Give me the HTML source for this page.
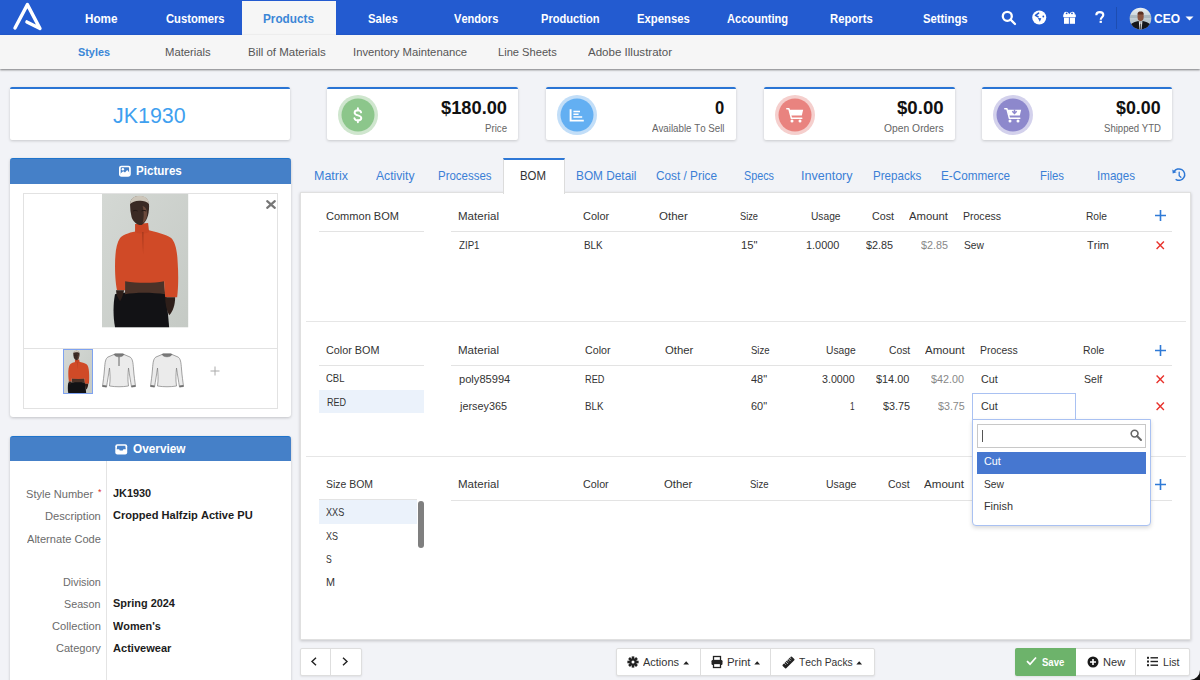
<!DOCTYPE html>
<html><head><meta charset="utf-8"><title>JK1930</title>
<style>
html,body{margin:0;padding:0;}
body{width:1200px;height:680px;overflow:hidden;position:relative;background:#f2f3f7;font-family:"Liberation Sans",sans-serif;}
.t{position:absolute;white-space:nowrap;line-height:1;font-kerning:none;}
.b{position:absolute;}
svg.b{overflow:visible;}
</style></head><body>
<div class="b" style="left:0px;top:0px;width:1200px;height:35px;background:#235bd0;"></div>
<div class="b" style="left:242px;top:1px;width:94px;height:34px;background:#f6f6f6;"></div>
<div class="b" style="left:0px;top:35px;width:1200px;height:34px;background:#f6f6f6;box-shadow:0 1px 2px rgba(0,0,0,.5);z-index:1;"></div>
<svg class="b" style="left:0px;top:0px;z-index:2;" width="48" height="35" viewBox="0 0 48 35"><path d="M15,28 L27.4,4.6 L40,28.6 L26.9,21.9" fill="none" stroke="#fff" stroke-width="3.4" stroke-linecap="round" stroke-linejoin="round"/></svg>
<div class="t" style="left:85.00px;top:12.69px;font-size:12.4px;color:#fff;font-weight:700;transform:scaleX(0.9436);transform-origin:0 0;z-index:2;">Home</div>
<div class="t" style="left:165.70px;top:12.69px;font-size:12.4px;color:#fff;font-weight:700;transform:scaleX(0.9053);transform-origin:0 0;z-index:2;">Customers</div>
<div class="t" style="left:263.30px;top:12.69px;font-size:12.4px;color:#3b86d6;font-weight:700;transform:scaleX(0.9499);transform-origin:0 0;z-index:2;">Products</div>
<div class="t" style="left:367.50px;top:12.69px;font-size:12.4px;color:#fff;font-weight:700;transform:scaleX(0.9177);transform-origin:0 0;z-index:2;">Sales</div>
<div class="t" style="left:454.00px;top:12.69px;font-size:12.4px;color:#fff;font-weight:700;transform:scaleX(0.8937);transform-origin:0 0;z-index:2;">Vendors</div>
<div class="t" style="left:540.70px;top:12.69px;font-size:12.4px;color:#fff;font-weight:700;transform:scaleX(0.8963);transform-origin:0 0;z-index:2;">Production</div>
<div class="t" style="left:637.30px;top:12.69px;font-size:12.4px;color:#fff;font-weight:700;transform:scaleX(0.9115);transform-origin:0 0;z-index:2;">Expenses</div>
<div class="t" style="left:726.70px;top:12.69px;font-size:12.4px;color:#fff;font-weight:700;transform:scaleX(0.8956);transform-origin:0 0;z-index:2;">Accounting</div>
<div class="t" style="left:830.00px;top:12.69px;font-size:12.4px;color:#fff;font-weight:700;transform:scaleX(0.9122);transform-origin:0 0;z-index:2;">Reports</div>
<div class="t" style="left:922.70px;top:12.69px;font-size:12.4px;color:#fff;font-weight:700;transform:scaleX(0.9129);transform-origin:0 0;z-index:2;">Settings</div>
<svg class="b" style="left:1001px;top:10px;z-index:2;" width="16" height="16" viewBox="0 0 16 16"><circle cx="6.3" cy="6.3" r="4.5" fill="none" stroke="#fff" stroke-width="2.3"/><path d="M9.6 9.6 L14 14" stroke="#fff" stroke-width="2.3" stroke-linecap="round"/></svg>
<svg class="b" style="left:1031px;top:10px;z-index:2;" width="17" height="16" viewBox="0 0 17 16"><circle cx="8.25" cy="7.5" r="7" fill="#fff"/><path d="M7.6 3.2 L4.5 5.4 L7 6.8" fill="none" stroke="#235bd0" stroke-width="1.6" stroke-linecap="round" stroke-linejoin="round"/><circle cx="12.3" cy="6.5" r="0.9" fill="#235bd0"/><path d="M6.9 7.9 L10.3 8.2 L8.8 11.8 Z" fill="#235bd0"/></svg>
<svg class="b" style="left:1062px;top:10px;z-index:2;" width="15" height="15" viewBox="0 0 15 15"><path d="M1.8 5 C1.3 1.2 5.6 0.6 7.3 4.3 C9 0.6 13.3 1.2 12.8 5 Z" fill="#fff"/><circle cx="4.6" cy="3.4" r="0.9" fill="#235bd0"/><circle cx="10" cy="3.4" r="0.9" fill="#235bd0"/><rect x="1.2" y="4.5" width="12.6" height="2.7" fill="#fff"/><rect x="2" y="7.6" width="11" height="6.2" fill="#fff"/><rect x="6.9" y="7.4" width="0.9" height="6.6" fill="#235bd0"/></svg>
<svg class="b" style="left:1094px;top:11px;z-index:2;" width="12" height="13" viewBox="0 0 12 13"><path d="M2.3 4.2 C2.3 2.2 3.8 1.1 5.8 1.1 C7.9 1.1 9.3 2.3 9.3 4 C9.3 6 6.8 6.3 6.8 8.3 V8.7" fill="none" stroke="#fff" stroke-width="2.1"/><rect x="5.6" y="9.8" width="2.3" height="2.1" fill="#fff"/></svg>
<div class="b" style="left:1116px;top:7px;width:1px;height:22px;background:rgba(0,0,0,.15);z-index:2;"></div>
<svg class="b" style="left:1129px;top:7px;z-index:2;" width="23" height="23" viewBox="0 0 23 23"><defs><clipPath id="av"><circle cx="11.5" cy="11.5" r="10.8"/></clipPath><linearGradient id="avg" x1="0" y1="0" x2="0" y2="1"><stop offset="0" stop-color="#eef3f5"/><stop offset="0.6" stop-color="#b9c6cc"/></linearGradient></defs><g clip-path="url(#avg)"></g><g clip-path="url(#av)"><rect width="23" height="23" fill="url(#avg)"/><rect x="0" y="8" width="23" height="3" fill="#8fa0a8" opacity="0.5"/><ellipse cx="11.6" cy="9.6" rx="3.1" ry="4.6" fill="#8a5540"/><path d="M8.4 7.5 C8.5 5 10 4.5 11.6 4.5 C13.3 4.5 14.7 5 14.8 7.5Z" fill="#5a3020"/><path d="M0 23 L1 18 C3 15.5 7 14.5 9.5 14 L11.6 16 L13.7 14 C16 14.5 20 15.5 22 18 L23 23Z" fill="#15171b"/><path d="M9.8 14.3 L11.6 16 L13.4 14.3 L12.6 23 L10.6 23Z" fill="#e8e8e8"/><path d="M11.1 16.5 L12.1 16.5 L12.4 23 L10.8 23Z" fill="#555"/></g></svg>
<div class="t" style="left:1154.00px;top:11.58px;font-size:13.2px;color:#fff;font-weight:700;transform:scaleX(0.9087);transform-origin:0 0;z-index:2;">CEO</div>
<svg class="b" style="left:1185px;top:16px;z-index:2;" width="9" height="5" viewBox="0 0 9 5"><path d="M0.5 0.5 L8.5 0.5 L4.5 4.5Z" fill="#fff"/></svg>
<div class="t" style="left:78.00px;top:46.77px;font-size:11.8px;color:#3b86d6;font-weight:700;transform:scaleX(0.9216);transform-origin:0 0;z-index:2;">Styles</div>
<div class="t" style="left:165.00px;top:46.77px;font-size:11.8px;color:#555;transform:scaleX(0.9557);transform-origin:0 0;z-index:2;">Materials</div>
<div class="t" style="left:248.00px;top:46.77px;font-size:11.8px;color:#555;transform:scaleX(0.9719);transform-origin:0 0;z-index:2;">Bill of Materials</div>
<div class="t" style="left:353.00px;top:46.77px;font-size:11.8px;color:#555;transform:scaleX(0.9563);transform-origin:0 0;z-index:2;">Inventory Maintenance</div>
<div class="t" style="left:498.00px;top:46.77px;font-size:11.8px;color:#555;transform:scaleX(0.9430);transform-origin:0 0;z-index:2;">Line Sheets</div>
<div class="t" style="left:587.70px;top:46.77px;font-size:11.8px;color:#555;transform:scaleX(0.9788);transform-origin:0 0;z-index:2;">Adobe Illustrator</div>
<div class="b" style="left:10px;top:87px;width:280px;height:53px;background:#fff;box-shadow:0 1px 3px rgba(0,0,0,.18);border-top:2px solid #2a74d4;box-sizing:border-box;border-radius:2px;"></div>
<div class="t" style="left:112.50px;top:104.67px;font-size:22.5px;color:#3fa0ef;transform:scaleX(0.9512);transform-origin:0 0;">JK1930</div>
<div class="b" style="left:10px;top:158px;width:281px;height:259px;background:#fff;box-shadow:0 1px 3px rgba(0,0,0,.2);border-radius:3px;"></div>
<div class="b" style="left:10px;top:158px;width:281px;height:26px;background:#4580c8;border-top:1px solid #1f74cc;box-sizing:border-box;border-radius:3px 3px 0 0;"></div>
<svg class="b" style="left:118px;top:165px;" width="13" height="12" viewBox="0 0 13 12"><rect x="1.85" y="1.5" width="10.1" height="9.4" rx="1.6" fill="none" stroke="#fff" stroke-width="1.7"/><circle cx="4.9" cy="4.2" r="1.2" fill="#fff"/><path d="M2.5 10.5 V8.6 L5.2 6.3 L7 7.6 L9.2 5 L11.3 7.6 V10.5Z" fill="#fff"/></svg>
<div class="t" style="left:136.00px;top:165.24px;font-size:12.8px;color:#fff;font-weight:700;transform:scaleX(0.9066);transform-origin:0 0;">Pictures</div>
<div class="b" style="left:23px;top:193px;width:255px;height:216px;border:1px solid #e2e2e2;box-sizing:border-box;"></div>
<div class="b" style="left:23px;top:348px;width:255px;height:1px;background:#e2e2e2;"></div>
<svg class="b" style="left:266px;top:200px;" width="10" height="9" viewBox="0 0 10 9"><path d="M1.2 1.2 L8.8 7.8 M8.8 1.2 L1.2 7.8" stroke="#777" stroke-width="2.2" stroke-linecap="round"/></svg>
<svg class="b" style="left:101.8px;top:193.7px" width="86.2" height="133.3" viewBox="0 0 86 133" preserveAspectRatio="none"><defs><linearGradient id="bgp1" x1="0" y1="0" x2="1" y2="1"><stop offset="0" stop-color="#d4d8d4"/><stop offset="1" stop-color="#c5cac5"/></linearGradient></defs><rect width="86" height="133" fill="url(#bgp1)"/><path d="M13 100 C25 97 50 97 64 99 L67 133 L13 133 C11 122 11 110 13 100Z" fill="#121215"/><path d="M23 86 L62 86 L63 100 C50 98 33 98 23 100Z" fill="#4a3228"/><path d="M36 37 C29 38 22 40 18 44 C14 50 13 60 13 72 C13 83 14 91 15 96 L23 96 L23 87 C36 89 51 89 62 87 L63 103 L75 103 C76 95 76.5 82 75.5 68 C75 56 73 48 69 44 C63 40 53 38 46 36 Z" fill="#d04a27"/><path d="M33 30 L46 29 L47 38 C43 40 37 40 33 38Z" fill="#c94524"/><path d="M40 38 L41.5 38 L41 60Z" fill="#a83a1e"/><path d="M63 103 L73 103 C73 110 71 117 67 121 C64 115 63 108 63 103Z" fill="#2e1f1a"/><path d="M14 96 L22 96 C21 101 20 104 18 107 C16 104 14 100 14 96Z" fill="#2e1f1a"/><path d="M28 11 C28 5 32 2 37.5 2 C43 2 47 5.5 47 12 C47 21 44.5 28 39.5 31 C35.5 31.5 31 28 29.5 23 C28.5 19 28 15 28 11Z" fill="#3a2a24"/><path d="M28 10 C28.5 4.5 32 1.8 37.5 1.8 C43 1.8 46.5 4.5 47 10 C44.5 7 40 6.5 37 6.8 C33 7 30 8 28 10Z" fill="#cdc6ba"/><path d="M40.5 12 C44 13 45.5 17 44.8 22 C44 26 42.5 28 40.5 29 C42 24.5 42 17 40.5 12Z" fill="#6b4a3c"/><path d="M31 17 C32.5 16.2 34 16.2 35.5 17 M39.5 17 C41 16.2 42.5 16.2 44 17" stroke="#1e1512" stroke-width="0.9" fill="none"/></svg>
<svg class="b" style="left:63.5px;top:349.5px" width="28.5" height="43.5" viewBox="0 0 86 133" preserveAspectRatio="none"><defs><linearGradient id="bgp2" x1="0" y1="0" x2="1" y2="1"><stop offset="0" stop-color="#d4d8d4"/><stop offset="1" stop-color="#c5cac5"/></linearGradient></defs><rect width="86" height="133" fill="url(#bgp2)"/><path d="M13 100 C25 97 50 97 64 99 L67 133 L13 133 C11 122 11 110 13 100Z" fill="#121215"/><path d="M23 86 L62 86 L63 100 C50 98 33 98 23 100Z" fill="#4a3228"/><path d="M36 37 C29 38 22 40 18 44 C14 50 13 60 13 72 C13 83 14 91 15 96 L23 96 L23 87 C36 89 51 89 62 87 L63 103 L75 103 C76 95 76.5 82 75.5 68 C75 56 73 48 69 44 C63 40 53 38 46 36 Z" fill="#d04a27"/><path d="M33 30 L46 29 L47 38 C43 40 37 40 33 38Z" fill="#c94524"/><path d="M40 38 L41.5 38 L41 60Z" fill="#a83a1e"/><path d="M63 103 L73 103 C73 110 71 117 67 121 C64 115 63 108 63 103Z" fill="#2e1f1a"/><path d="M14 96 L22 96 C21 101 20 104 18 107 C16 104 14 100 14 96Z" fill="#2e1f1a"/><path d="M28 11 C28 5 32 2 37.5 2 C43 2 47 5.5 47 12 C47 21 44.5 28 39.5 31 C35.5 31.5 31 28 29.5 23 C28.5 19 28 15 28 11Z" fill="#3a2a24"/><path d="M28 10 C28.5 4.5 32 1.8 37.5 1.8 C43 1.8 46.5 4.5 47 10 C44.5 7 40 6.5 37 6.8 C33 7 30 8 28 10Z" fill="#cdc6ba"/><path d="M40.5 12 C44 13 45.5 17 44.8 22 C44 26 42.5 28 40.5 29 C42 24.5 42 17 40.5 12Z" fill="#6b4a3c"/><path d="M31 17 C32.5 16.2 34 16.2 35.5 17 M39.5 17 C41 16.2 42.5 16.2 44 17" stroke="#1e1512" stroke-width="0.9" fill="none"/></svg>
<div class="b" style="left:63px;top:349px;width:30px;height:45px;border:1px solid #7ea2f0;box-sizing:border-box;"></div>
<svg class="b" style="left:102px;top:352.5px" width="34" height="36" viewBox="0 0 34 36"><path d="M12 1.5 L22 1.5 L28 4 C30.5 5.5 31 9 31.5 16 C32 23 33 29 33.5 33.5 L29.5 34 C28.5 28 27.5 22 26.5 15 C26 21 25.5 26 26.5 33 C20 34 14 34 7.5 33 C8.5 26 8 21 7.5 15 C6.5 22 5.5 28 4.5 34 L0.5 33.5 C1 29 2 23 2.5 16 C3 9 3.5 5.5 6 4 Z" fill="#ebebeb" stroke="#7d7d7d" stroke-width="0.7"/><path d="M12 1.5 C14 4.5 20 4.5 22 1.5 L21 0.8 L13 0.8Z" fill="#7a7a7a" stroke="#666" stroke-width="0.6"/><path d="M17 4 V13" stroke="#666" stroke-width="1"/><path d="M0.6 32 L4.6 32.5 L4.5 34.3 L0.5 33.8Z M29.4 32.5 L33.4 32 L33.5 33.8 L29.5 34.3Z" fill="#6f6f6f"/></svg>
<svg class="b" style="left:149.5px;top:352.5px" width="34" height="36" viewBox="0 0 34 36"><path d="M12 1.5 L22 1.5 L28 4 C30.5 5.5 31 9 31.5 16 C32 23 33 29 33.5 33.5 L29.5 34 C28.5 28 27.5 22 26.5 15 C26 21 25.5 26 26.5 33 C20 34 14 34 7.5 33 C8.5 26 8 21 7.5 15 C6.5 22 5.5 28 4.5 34 L0.5 33.5 C1 29 2 23 2.5 16 C3 9 3.5 5.5 6 4 Z" fill="#ebebeb" stroke="#7d7d7d" stroke-width="0.7"/><path d="M12 1.5 C14 4.5 20 4.5 22 1.5 L21 0.8 L13 0.8Z" fill="#7a7a7a" stroke="#666" stroke-width="0.6"/><path d="M0.6 32 L4.6 32.5 L4.5 34.3 L0.5 33.8Z M29.4 32.5 L33.4 32 L33.5 33.8 L29.5 34.3Z" fill="#6f6f6f"/></svg>
<svg class="b" style="left:210px;top:366px;" width="10" height="10" viewBox="0 0 10 10"><path d="M5 0.5 V9.5 M0.5 5 H9.5" stroke="#aaa" stroke-width="1"/></svg>
<div class="b" style="left:10px;top:436px;width:281px;height:264px;background:#fff;box-shadow:0 1px 3px rgba(0,0,0,.2);border-radius:3px;"></div>
<div class="b" style="left:10px;top:436px;width:281px;height:25px;background:#4580c8;border-top:1px solid #1f74cc;box-sizing:border-box;border-radius:3px 3px 0 0;"></div>
<svg class="b" style="left:115px;top:443.5px;" width="13" height="11" viewBox="0 0 13 11"><rect x="0.3" y="0.2" width="11.9" height="10.4" rx="2" fill="#fff"/><path d="M2.2 1.8 H10.3 L10.8 5.3 H8.4 L7.7 6.5 H4.8 L4.1 5.3 H1.7Z" fill="#4580c8"/></svg>
<div class="t" style="left:133.00px;top:442.94px;font-size:12.8px;color:#fff;font-weight:700;transform:scaleX(0.9227);transform-origin:0 0;">Overview</div>
<div class="b" style="left:105.5px;top:461px;width:1.0px;height:239px;background:#e4e4e4;"></div>
<div class="t" style="left:26.00px;top:487.89px;font-size:11.6px;color:#6b6b6b;transform:scaleX(0.9557);transform-origin:0 0;">Style Number</div>
<div class="t" style="left:97.90px;top:487.73px;font-size:9px;color:#e0302a;">*</div>
<div class="t" style="left:112.90px;top:487.49px;font-size:11.6px;color:#1c1c1c;font-weight:700;transform:scaleX(0.9391);transform-origin:0 0;">JK1930</div>
<div class="t" style="left:44.60px;top:509.74px;font-size:11.6px;color:#6b6b6b;transform:scaleX(0.9626);transform-origin:0 0;">Description</div>
<div class="t" style="left:112.90px;top:509.34px;font-size:11.6px;color:#1c1c1c;font-weight:700;transform:scaleX(0.9549);transform-origin:0 0;">Cropped Halfzip Active PU</div>
<div class="t" style="left:26.50px;top:532.69px;font-size:11.6px;color:#6b6b6b;transform:scaleX(0.9562);transform-origin:0 0;">Alternate Code</div>
<div class="t" style="left:62.50px;top:575.79px;font-size:11.6px;color:#6b6b6b;transform:scaleX(0.9335);transform-origin:0 0;">Division</div>
<div class="t" style="left:64.00px;top:597.69px;font-size:11.6px;color:#6b6b6b;transform:scaleX(0.9263);transform-origin:0 0;">Season</div>
<div class="t" style="left:112.90px;top:597.29px;font-size:11.6px;color:#1c1c1c;font-weight:700;transform:scaleX(0.9424);transform-origin:0 0;">Spring 2024</div>
<div class="t" style="left:51.50px;top:620.19px;font-size:11.6px;color:#6b6b6b;transform:scaleX(0.9608);transform-origin:0 0;">Collection</div>
<div class="t" style="left:112.90px;top:619.79px;font-size:11.6px;color:#1c1c1c;font-weight:700;transform:scaleX(0.9379);transform-origin:0 0;">Women's</div>
<div class="t" style="left:55.60px;top:642.49px;font-size:11.6px;color:#6b6b6b;transform:scaleX(0.9530);transform-origin:0 0;">Category</div>
<div class="t" style="left:112.90px;top:642.09px;font-size:11.6px;color:#1c1c1c;font-weight:700;transform:scaleX(0.9536);transform-origin:0 0;">Activewear</div>
<div class="b" style="left:327px;top:87px;width:191px;height:53px;background:#fff;box-shadow:0 1px 3px rgba(0,0,0,.18);border-top:2px solid #2a74d4;box-sizing:border-box;border-radius:2px;"></div>
<svg class="b" style="left:338.3px;top:94.9px;" width="40" height="40" viewBox="0 0 40 40"><circle cx="20" cy="20" r="20" fill="#cfe6ce"/><circle cx="20" cy="20" r="16.5" fill="#8cc68b"/><path d="M23.1 17.4 C22.6 15.9 21.4 15.3 19.9 15.3 C17.9 15.3 16.6 16.3 16.6 17.8 C16.6 21.2 23.3 19.6 23.3 23 C23.3 24.6 21.9 25.4 19.9 25.4 C18.1 25.4 16.9 24.7 16.4 23.2" fill="none" stroke="#fff" stroke-width="1.9" stroke-linecap="round"/><path d="M19.9 13.1 V15.4 M19.9 25.3 V27.3" stroke="#fff" stroke-width="1.9" stroke-linecap="round"/></svg>
<div class="t" style="left:440.60px;top:99.09px;font-size:18.5px;color:#111;font-weight:700;transform:scaleX(0.9874);transform-origin:0 0;">$180.00</div>
<div class="t" style="left:484.50px;top:122.62px;font-size:10.6px;color:#666;transform:scaleX(0.9113);transform-origin:0 0;">Price</div>
<div class="b" style="left:546px;top:87px;width:190px;height:53px;background:#fff;box-shadow:0 1px 3px rgba(0,0,0,.18);border-top:2px solid #2a74d4;box-sizing:border-box;border-radius:2px;"></div>
<svg class="b" style="left:557.3px;top:94.9px;" width="40" height="40" viewBox="0 0 40 40"><circle cx="20" cy="20" r="20" fill="#c2def8"/><circle cx="20" cy="20" r="16.5" fill="#63aff2"/><path d="M13.6 14.2 V25.6 H26.8" fill="none" stroke="#fff" stroke-width="1.9"/><path d="M16.4 16.6 H23 M16.4 19.3 H21.6 M16.4 22.1 H25.2" stroke="#fff" stroke-width="1.5"/></svg>
<div class="t" style="left:715.30px;top:99.09px;font-size:18.5px;color:#111;font-weight:700;transform:scaleX(0.8960);transform-origin:0 0;">0</div>
<div class="t" style="left:652.00px;top:122.62px;font-size:10.6px;color:#666;transform:scaleX(0.9193);transform-origin:0 0;">Available To Sell</div>
<div class="b" style="left:764px;top:87px;width:191px;height:53px;background:#fff;box-shadow:0 1px 3px rgba(0,0,0,.18);border-top:2px solid #2a74d4;box-sizing:border-box;border-radius:2px;"></div>
<svg class="b" style="left:775.3px;top:94.9px;" width="40" height="40" viewBox="0 0 40 40"><circle cx="20" cy="20" r="20" fill="#f5cfcd"/><circle cx="20" cy="20" r="16.5" fill="#e9837f"/><path d="M11.8 13.7 H13.9 L16.4 23.2 H26.8" fill="none" stroke="#fff" stroke-width="1.5" stroke-linejoin="round" stroke-linecap="round"/><path d="M14.4 14.8 H28.2 L26.8 20.6 H16Z" fill="#fff"/><circle cx="17" cy="26.1" r="1.5" fill="#fff"/><circle cx="25" cy="26.1" r="1.5" fill="#fff"/></svg>
<div class="t" style="left:897.00px;top:99.09px;font-size:18.5px;color:#111;font-weight:700;transform:scaleX(1.0064);transform-origin:0 0;">$0.00</div>
<div class="t" style="left:883.90px;top:122.62px;font-size:10.6px;color:#666;transform:scaleX(0.9740);transform-origin:0 0;">Open Orders</div>
<div class="b" style="left:982px;top:87px;width:190px;height:53px;background:#fff;box-shadow:0 1px 3px rgba(0,0,0,.18);border-top:2px solid #2a74d4;box-sizing:border-box;border-radius:2px;"></div>
<svg class="b" style="left:993.3px;top:94.9px;" width="40" height="40" viewBox="0 0 40 40"><circle cx="20" cy="20" r="20" fill="#d3d1ec"/><circle cx="20" cy="20" r="16.5" fill="#8d88cc"/><path d="M11.8 13.7 H13.9 L16.4 23.2 H26.8" fill="none" stroke="#fff" stroke-width="1.5" stroke-linejoin="round" stroke-linecap="round"/><path d="M14.4 14.8 H28.2 L26.8 20.6 H16Z" fill="#fff"/><circle cx="17" cy="26.1" r="1.5" fill="#fff"/><circle cx="25" cy="26.1" r="1.5" fill="#fff"/><path d="M21.5 14.6 V18 M19.3 16.3 L21.5 18.5 L23.7 16.3" stroke="#8d88cc" stroke-width="1.5" fill="none"/></svg>
<div class="t" style="left:1116.00px;top:99.09px;font-size:18.5px;color:#111;font-weight:700;transform:scaleX(0.9631);transform-origin:0 0;">$0.00</div>
<div class="t" style="left:1103.60px;top:122.62px;font-size:10.6px;color:#666;transform:scaleX(0.9033);transform-origin:0 0;">Shipped YTD</div>
<div class="b" style="left:300px;top:192px;width:891px;height:447.5px;background:#fff;box-shadow:0 1px 3px rgba(0,0,0,.2);border:1px solid #e0e0e0;box-sizing:border-box;"></div>
<div class="b" style="left:502.5px;top:158px;width:62.0px;height:36px;background:#fff;border:1px solid #dcdcdc;border-bottom:none;border-top:2px solid #2f78d6;box-sizing:border-box;z-index:1;"></div>
<div class="t" style="left:314.00px;top:169.66px;font-size:12.6px;color:#3b7fd6;transform:scaleX(0.9921);transform-origin:0 0;z-index:2;">Matrix</div>
<div class="t" style="left:376.00px;top:169.66px;font-size:12.6px;color:#3b7fd6;transform:scaleX(0.9647);transform-origin:0 0;z-index:2;">Activity</div>
<div class="t" style="left:437.50px;top:169.66px;font-size:12.6px;color:#3b7fd6;transform:scaleX(0.9102);transform-origin:0 0;z-index:2;">Processes</div>
<div class="t" style="left:520.00px;top:169.66px;font-size:12.6px;color:#333;transform:scaleX(0.9060);transform-origin:0 0;z-index:2;">BOM</div>
<div class="t" style="left:575.50px;top:169.66px;font-size:12.6px;color:#3b7fd6;transform:scaleX(0.9396);transform-origin:0 0;z-index:2;">BOM Detail</div>
<div class="t" style="left:656.00px;top:169.66px;font-size:12.6px;color:#3b7fd6;transform:scaleX(0.9373);transform-origin:0 0;z-index:2;">Cost / Price</div>
<div class="t" style="left:744.00px;top:169.66px;font-size:12.6px;color:#3b7fd6;transform:scaleX(0.8572);transform-origin:0 0;z-index:2;">Specs</div>
<div class="t" style="left:801.00px;top:169.66px;font-size:12.6px;color:#3b7fd6;transform:scaleX(0.9951);transform-origin:0 0;z-index:2;">Inventory</div>
<div class="t" style="left:872.70px;top:169.66px;font-size:12.6px;color:#3b7fd6;transform:scaleX(0.9204);transform-origin:0 0;z-index:2;">Prepacks</div>
<div class="t" style="left:941.00px;top:169.66px;font-size:12.6px;color:#3b7fd6;transform:scaleX(0.9305);transform-origin:0 0;z-index:2;">E-Commerce</div>
<div class="t" style="left:1040.00px;top:169.66px;font-size:12.6px;color:#3b7fd6;transform:scaleX(0.9027);transform-origin:0 0;z-index:2;">Files</div>
<div class="t" style="left:1097.00px;top:169.66px;font-size:12.6px;color:#3b7fd6;transform:scaleX(0.9209);transform-origin:0 0;z-index:2;">Images</div>
<svg class="b" style="left:1170px;top:166px;" width="16" height="16" viewBox="0 0 16 16"><path d="M4.06 5.75 A5.7 5.7 0 1 1 6.15 13.54" fill="none" stroke="#2f78d6" stroke-width="1.5" stroke-linecap="round"/><path d="M2.3 3.6 L6.6 6.3 L2.7 7.6Z" fill="#2f78d6"/><path d="M9.2 6.2 V9.6 L10.9 11.2" fill="none" stroke="#2f78d6" stroke-width="1.3" stroke-linecap="round"/></svg>
<div class="t" style="left:326.00px;top:210.92px;font-size:11.4px;color:#333;transform:scaleX(0.9691);transform-origin:0 0;">Common BOM</div>
<div class="b" style="left:319px;top:231px;width:105px;height:1px;background:#e3e3e3;"></div>
<div class="t" style="left:458.00px;top:211.02px;font-size:11.4px;color:#333;transform:scaleX(1.0124);transform-origin:0 0;">Material</div>
<div class="t" style="left:583.00px;top:211.02px;font-size:11.4px;color:#333;transform:scaleX(0.9645);transform-origin:0 0;">Color</div>
<div class="t" style="left:658.75px;top:211.02px;font-size:11.4px;color:#333;transform:scaleX(1.0098);transform-origin:0 0;">Other</div>
<div class="t" style="left:740.00px;top:211.02px;font-size:11.4px;color:#333;transform:scaleX(0.8118);transform-origin:0 0;">Size</div>
<div class="t" style="left:811.00px;top:211.02px;font-size:11.4px;color:#333;transform:scaleX(0.8962);transform-origin:0 0;">Usage</div>
<div class="t" style="left:872.00px;top:211.02px;font-size:11.4px;color:#333;transform:scaleX(0.9391);transform-origin:0 0;">Cost</div>
<div class="t" style="left:909.00px;top:211.02px;font-size:11.4px;color:#333;transform:scaleX(0.9938);transform-origin:0 0;">Amount</div>
<div class="t" style="left:963.00px;top:211.02px;font-size:11.4px;color:#333;transform:scaleX(0.9234);transform-origin:0 0;">Process</div>
<div class="t" style="left:1086.00px;top:211.02px;font-size:11.4px;color:#333;transform:scaleX(0.8964);transform-origin:0 0;">Role</div>
<svg class="b" style="left:1155px;top:210px;" width="11" height="11" viewBox="0 0 11 11"><path d="M5.5 0 V11 M0 5.5 H11" stroke="#2f7ad6" stroke-width="1.6"/></svg>
<div class="b" style="left:451px;top:231px;width:721px;height:1px;background:#e3e3e3;"></div>
<div class="t" style="left:458.75px;top:239.72px;font-size:11.4px;color:#333;transform:scaleX(0.8522);transform-origin:0 0;">ZIP1</div>
<div class="t" style="left:584.25px;top:239.72px;font-size:11.4px;color:#333;transform:scaleX(0.8702);transform-origin:0 0;">BLK</div>
<div class="t" style="left:740.50px;top:239.72px;font-size:11.4px;color:#333;transform:scaleX(0.9880);transform-origin:0 0;">15"</div>
<div class="t" style="left:806.25px;top:239.72px;font-size:11.4px;color:#333;transform:scaleX(0.9555);transform-origin:0 0;">1.0000</div>
<div class="t" style="left:866.00px;top:239.72px;font-size:11.4px;color:#333;transform:scaleX(0.9483);transform-origin:0 0;">$2.85</div>
<div class="t" style="left:920.50px;top:239.72px;font-size:11.4px;color:#888;transform:scaleX(0.9483);transform-origin:0 0;">$2.85</div>
<div class="t" style="left:963.75px;top:239.72px;font-size:11.4px;color:#333;transform:scaleX(0.9008);transform-origin:0 0;">Sew</div>
<div class="t" style="left:1087.00px;top:239.72px;font-size:11.4px;color:#333;transform:scaleX(0.9661);transform-origin:0 0;">Trim</div>
<svg class="b" style="left:1155.8px;top:241.4px;" width="8.5" height="8.5" viewBox="0 0 8.5 8.5"><path d="M0.6 0.6 L7.9 7.9 M7.9 0.6 L0.6 7.9" stroke="#e8322c" stroke-width="1.4"/></svg>
<div class="b" style="left:305.5px;top:321px;width:880.5px;height:1px;background:#e6e6e6;"></div>
<div class="t" style="left:326.20px;top:344.82px;font-size:11.4px;color:#333;transform:scaleX(0.9495);transform-origin:0 0;">Color BOM</div>
<div class="b" style="left:319px;top:365px;width:105px;height:1px;background:#e3e3e3;"></div>
<div class="t" style="left:326.20px;top:373.22px;font-size:11.4px;color:#333;transform:scaleX(0.8343);transform-origin:0 0;">CBL</div>
<div class="b" style="left:319px;top:390px;width:105px;height:23px;background:#ebf2fb;"></div>
<div class="t" style="left:326.70px;top:396.52px;font-size:11.4px;color:#333;transform:scaleX(0.7931);transform-origin:0 0;">RED</div>
<div class="t" style="left:458.30px;top:344.82px;font-size:11.4px;color:#333;transform:scaleX(1.0124);transform-origin:0 0;">Material</div>
<div class="t" style="left:584.50px;top:344.82px;font-size:11.4px;color:#333;transform:scaleX(0.9369);transform-origin:0 0;">Color</div>
<div class="t" style="left:665.00px;top:344.82px;font-size:11.4px;color:#333;transform:scaleX(0.9940);transform-origin:0 0;">Other</div>
<div class="t" style="left:750.70px;top:344.82px;font-size:11.4px;color:#333;transform:scaleX(0.8389);transform-origin:0 0;">Size</div>
<div class="t" style="left:826.40px;top:344.82px;font-size:11.4px;color:#333;transform:scaleX(0.8992);transform-origin:0 0;">Usage</div>
<div class="t" style="left:888.75px;top:344.82px;font-size:11.4px;color:#333;transform:scaleX(0.9071);transform-origin:0 0;">Cost</div>
<div class="t" style="left:925.30px;top:344.82px;font-size:11.4px;color:#333;transform:scaleX(1.0116);transform-origin:0 0;">Amount</div>
<div class="t" style="left:980.30px;top:344.82px;font-size:11.4px;color:#333;transform:scaleX(0.9161);transform-origin:0 0;">Process</div>
<div class="t" style="left:1083.30px;top:344.82px;font-size:11.4px;color:#333;transform:scaleX(0.9135);transform-origin:0 0;">Role</div>
<svg class="b" style="left:1155px;top:344.5px;" width="11" height="11" viewBox="0 0 11 11"><path d="M5.5 0 V11 M0 5.5 H11" stroke="#2f7ad6" stroke-width="1.6"/></svg>
<div class="b" style="left:451px;top:365px;width:721px;height:1px;background:#e3e3e3;"></div>
<div class="t" style="left:459.25px;top:373.82px;font-size:11.4px;color:#333;transform:scaleX(0.9757);transform-origin:0 0;">poly85994</div>
<div class="t" style="left:585.30px;top:373.82px;font-size:11.4px;color:#333;transform:scaleX(0.8056);transform-origin:0 0;">RED</div>
<div class="t" style="left:751.30px;top:373.82px;font-size:11.4px;color:#333;transform:scaleX(0.9580);transform-origin:0 0;">48"</div>
<div class="t" style="left:822.40px;top:373.82px;font-size:11.4px;color:#333;transform:scaleX(0.9368);transform-origin:0 0;">3.0000</div>
<div class="t" style="left:876.25px;top:373.82px;font-size:11.4px;color:#333;transform:scaleX(0.9555);transform-origin:0 0;">$14.00</div>
<div class="t" style="left:931.30px;top:373.82px;font-size:11.4px;color:#888;transform:scaleX(0.9454);transform-origin:0 0;">$42.00</div>
<div class="t" style="left:980.80px;top:373.82px;font-size:11.4px;color:#333;transform:scaleX(0.9421);transform-origin:0 0;">Cut</div>
<div class="t" style="left:1084.40px;top:373.82px;font-size:11.4px;color:#333;transform:scaleX(0.9255);transform-origin:0 0;">Self</div>
<svg class="b" style="left:1155.8px;top:375.4px;" width="8.5" height="8.5" viewBox="0 0 8.5 8.5"><path d="M0.6 0.6 L7.9 7.9 M7.9 0.6 L0.6 7.9" stroke="#e8322c" stroke-width="1.4"/></svg>
<div class="t" style="left:459.52px;top:400.72px;font-size:11.4px;color:#333;transform:scaleX(0.9517);transform-origin:0 0;">jersey365</div>
<div class="t" style="left:585.30px;top:400.72px;font-size:11.4px;color:#333;transform:scaleX(0.8540);transform-origin:0 0;">BLK</div>
<div class="t" style="left:751.30px;top:400.72px;font-size:11.4px;color:#333;transform:scaleX(0.9580);transform-origin:0 0;">60"</div>
<div class="t" style="left:850.40px;top:400.72px;font-size:11.4px;color:#333;transform:scaleX(0.7270);transform-origin:0 0;">1</div>
<div class="t" style="left:882.50px;top:400.72px;font-size:11.4px;color:#333;transform:scaleX(0.9483);transform-origin:0 0;">$3.75</div>
<div class="t" style="left:937.50px;top:400.72px;font-size:11.4px;color:#888;transform:scaleX(0.9378);transform-origin:0 0;">$3.75</div>
<svg class="b" style="left:1155.8px;top:402.4px;" width="8.5" height="8.5" viewBox="0 0 8.5 8.5"><path d="M0.6 0.6 L7.9 7.9 M7.9 0.6 L0.6 7.9" stroke="#e8322c" stroke-width="1.4"/></svg>
<div class="b" style="left:305.5px;top:455.5px;width:880.5px;height:1.0px;background:#e6e6e6;"></div>
<div class="t" style="left:326.00px;top:478.52px;font-size:11.4px;color:#333;transform:scaleX(0.9162);transform-origin:0 0;">Size BOM</div>
<div class="b" style="left:319px;top:499px;width:98px;height:1px;background:#e3e3e3;"></div>
<div class="b" style="left:319px;top:500px;width:98px;height:24px;background:#ebf2fb;"></div>
<div class="t" style="left:326.00px;top:506.52px;font-size:11.4px;color:#333;transform:scaleX(0.7994);transform-origin:0 0;">XXS</div>
<div class="t" style="left:326.00px;top:530.52px;font-size:11.4px;color:#333;transform:scaleX(0.7885);transform-origin:0 0;">XS</div>
<div class="t" style="left:326.00px;top:554.32px;font-size:11.4px;color:#333;transform:scaleX(0.7556);transform-origin:0 0;">S</div>
<div class="t" style="left:326.00px;top:577.32px;font-size:11.4px;color:#333;transform:scaleX(0.9483);transform-origin:0 0;">M</div>
<div class="b" style="left:418px;top:500.5px;width:6px;height:47.5px;background:#7f7f7f;border-radius:3px;"></div>
<div class="t" style="left:458.30px;top:478.72px;font-size:11.4px;color:#333;transform:scaleX(1.0124);transform-origin:0 0;">Material</div>
<div class="t" style="left:583.30px;top:478.72px;font-size:11.4px;color:#333;transform:scaleX(0.9442);transform-origin:0 0;">Color</div>
<div class="t" style="left:664.30px;top:478.72px;font-size:11.4px;color:#333;transform:scaleX(0.9940);transform-origin:0 0;">Other</div>
<div class="t" style="left:750.00px;top:478.72px;font-size:11.4px;color:#333;transform:scaleX(0.8389);transform-origin:0 0;">Size</div>
<div class="t" style="left:825.70px;top:478.72px;font-size:11.4px;color:#333;transform:scaleX(0.9205);transform-origin:0 0;">Usage</div>
<div class="t" style="left:887.70px;top:478.72px;font-size:11.4px;color:#333;transform:scaleX(0.9220);transform-origin:0 0;">Cost</div>
<div class="t" style="left:924.00px;top:478.72px;font-size:11.4px;color:#333;transform:scaleX(1.0193);transform-origin:0 0;">Amount</div>
<svg class="b" style="left:1155px;top:478.5px;" width="11" height="11" viewBox="0 0 11 11"><path d="M5.5 0 V11 M0 5.5 H11" stroke="#2f7ad6" stroke-width="1.6"/></svg>
<div class="b" style="left:451px;top:499.5px;width:721px;height:1.0px;background:#e3e3e3;"></div>
<div class="b" style="left:972px;top:393px;width:104px;height:27px;background:#fff;border:1px solid #a9c1f2;border-bottom:none;box-sizing:border-box;z-index:3;"></div>
<div class="t" style="left:980.80px;top:400.72px;font-size:11.4px;color:#333;transform:scaleX(0.9421);transform-origin:0 0;z-index:4;">Cut</div>
<div class="b" style="left:972px;top:419px;width:179px;height:107px;background:#fff;border:1px solid #a9c1f2;border-radius:0 0 4px 4px;box-sizing:border-box;box-shadow:0 2px 4px rgba(0,0,0,.15);z-index:3;"></div>
<div class="b" style="left:976.8px;top:423.5px;width:169.70000000000005px;height:24.5px;border:1px solid #c8c8c8;box-sizing:border-box;z-index:4;"></div>
<div class="b" style="left:982.3px;top:430px;width:1.0px;height:12px;background:#555;z-index:4;"></div>
<svg class="b" style="left:1130px;top:429px;z-index:4;" width="12" height="12" viewBox="0 0 12 12"><circle cx="4.6" cy="4.6" r="3.4" fill="none" stroke="#666" stroke-width="1.6"/><path d="M7 7 L11 11" stroke="#666" stroke-width="2" stroke-linecap="round"/></svg>
<div class="b" style="left:976.8px;top:451.5px;width:169.70000000000005px;height:22.0px;background:#4677d0;z-index:4;"></div>
<div class="t" style="left:983.50px;top:455.72px;font-size:11.4px;color:#fff;transform:scaleX(0.9477);transform-origin:0 0;z-index:5;">Cut</div>
<div class="t" style="left:983.50px;top:478.82px;font-size:11.4px;color:#333;transform:scaleX(0.9008);transform-origin:0 0;z-index:5;">Sew</div>
<div class="t" style="left:983.50px;top:500.92px;font-size:11.4px;color:#333;transform:scaleX(0.9513);transform-origin:0 0;z-index:5;">Finish</div>
<div class="b" style="left:299.5px;top:648px;width:62.0px;height:27.5px;background:#fff;border:1px solid #dedede;box-sizing:border-box;border-radius:2px;box-shadow:0 1px 2px rgba(0,0,0,.08);"></div>
<div class="b" style="left:330px;top:648px;width:1px;height:27.5px;background:#dedede;"></div>
<svg class="b" style="left:310px;top:657px;" width="8" height="9" viewBox="0 0 8 9"><path d="M6 0.8 L2 4.5 L6 8.2" fill="none" stroke="#222" stroke-width="1.4"/></svg>
<svg class="b" style="left:341px;top:657px;" width="8" height="9" viewBox="0 0 8 9"><path d="M2 0.8 L6 4.5 L2 8.2" fill="none" stroke="#222" stroke-width="1.4"/></svg>
<div class="b" style="left:616px;top:648px;width:258.5px;height:27.5px;background:#fff;border:1px solid #dedede;box-sizing:border-box;border-radius:2px;box-shadow:0 1px 2px rgba(0,0,0,.08);"></div>
<div class="b" style="left:700.2px;top:648px;width:1.0px;height:27.5px;background:#dedede;"></div>
<div class="b" style="left:770.3px;top:648px;width:1.0px;height:27.5px;background:#dedede;"></div>
<svg class="b" style="left:627px;top:656px;" width="12" height="12" viewBox="0 0 12 12"><g transform="translate(6 6)"><circle r="3.6" fill="#222"/><g fill="#222"><rect x="-1.3" y="-5.6" width="2.6" height="3" transform="rotate(0)"/><rect x="-1.3" y="-5.6" width="2.6" height="3" transform="rotate(45)"/><rect x="-1.3" y="-5.6" width="2.6" height="3" transform="rotate(90)"/><rect x="-1.3" y="-5.6" width="2.6" height="3" transform="rotate(135)"/><rect x="-1.3" y="-5.6" width="2.6" height="3" transform="rotate(180)"/><rect x="-1.3" y="-5.6" width="2.6" height="3" transform="rotate(225)"/><rect x="-1.3" y="-5.6" width="2.6" height="3" transform="rotate(270)"/><rect x="-1.3" y="-5.6" width="2.6" height="3" transform="rotate(315)"/></g><circle r="1.5" fill="#fff"/></g></svg>
<div class="t" style="left:643.00px;top:655.99px;font-size:11.6px;color:#333;transform:scaleX(0.9469);transform-origin:0 0;">Actions</div>
<svg class="b" style="left:682.5px;top:660.8px;" width="7" height="4" viewBox="0 0 7 4"><path d="M0.3 3.6 L3.2 0.3 L6.1 3.6Z" fill="#222"/></svg>
<svg class="b" style="left:711px;top:656px;" width="12" height="12" viewBox="0 0 12 12"><rect x="2.5" y="0.5" width="7" height="4" fill="none" stroke="#222" stroke-width="1.3"/><rect x="0.5" y="4" width="11" height="5" rx="1.2" fill="#222"/><rect x="2.5" y="7.5" width="7" height="4" fill="#fff" stroke="#222" stroke-width="1.3"/></svg>
<div class="t" style="left:727.00px;top:655.99px;font-size:11.6px;color:#333;transform:scaleX(0.9858);transform-origin:0 0;">Print</div>
<svg class="b" style="left:754px;top:660.8px;" width="7" height="4" viewBox="0 0 7 4"><path d="M0.3 3.6 L3.2 0.3 L6.1 3.6Z" fill="#222"/></svg>
<svg class="b" style="left:782px;top:655.5px;" width="13" height="13" viewBox="0 0 13 13"><g transform="rotate(-45 6.5 6.5)"><rect x="0" y="4" width="13" height="5" rx="0.8" fill="#222"/><path d="M3 4 V6 M5 4 V7 M7 4 V6 M9 4 V7 M11 4 V6" stroke="#fff" stroke-width="0.7"/></g></svg>
<div class="t" style="left:798.80px;top:655.99px;font-size:11.6px;color:#333;transform:scaleX(0.8873);transform-origin:0 0;">Tech Packs</div>
<svg class="b" style="left:855.8px;top:660.8px;" width="7" height="4" viewBox="0 0 7 4"><path d="M0.3 3.6 L3.2 0.3 L6.1 3.6Z" fill="#222"/></svg>
<div class="b" style="left:1015px;top:648px;width:175px;height:27.5px;background:#fff;border:1px solid #dedede;box-sizing:border-box;border-radius:2px;box-shadow:0 1px 2px rgba(0,0,0,.08);"></div>
<div class="b" style="left:1015px;top:648px;width:60.5px;height:27.5px;background:#6db36b;border-radius:2px 0 0 2px;"></div>
<div class="b" style="left:1135px;top:648px;width:1px;height:27.5px;background:#dedede;"></div>
<svg class="b" style="left:1026px;top:656px;" width="11" height="10" viewBox="0 0 11 10"><path d="M1 5.2 L4 8.2 L10 1.5" fill="none" stroke="#fff" stroke-width="1.7"/></svg>
<div class="t" style="left:1041.70px;top:655.99px;font-size:11.6px;color:#fff;font-weight:700;transform:scaleX(0.8242);transform-origin:0 0;">Save</div>
<svg class="b" style="left:1086.5px;top:656px;" width="12" height="12" viewBox="0 0 12 12"><circle cx="6" cy="6" r="5.5" fill="#1a1a1a"/><path d="M6 3 V9 M3 6 H9" stroke="#fff" stroke-width="1.6"/></svg>
<div class="t" style="left:1102.50px;top:655.99px;font-size:11.6px;color:#333;transform:scaleX(0.9557);transform-origin:0 0;">New</div>
<svg class="b" style="left:1146.5px;top:656px;" width="12" height="11" viewBox="0 0 12 11"><rect x="0" y="0.8" width="2" height="2" fill="#222"/><rect x="0" y="4.5" width="2" height="2" fill="#222"/><rect x="0" y="8.2" width="2" height="2" fill="#222"/><rect x="3.5" y="1.1" width="7.5" height="1.4" fill="#222"/><rect x="3.5" y="4.8" width="7.5" height="1.4" fill="#222"/><rect x="3.5" y="8.5" width="7.5" height="1.4" fill="#222"/></svg>
<div class="t" style="left:1162.50px;top:655.99px;font-size:11.6px;color:#333;transform:scaleX(0.9147);transform-origin:0 0;">List</div>
<svg class="b" style="left:1188px;top:668px;z-index:9" width="12" height="12" viewBox="0 0 12 12"><path d="M12 2 L12 12 L2 12 A10 10 0 0 0 12 2Z" fill="#111"/></svg>
</body></html>
